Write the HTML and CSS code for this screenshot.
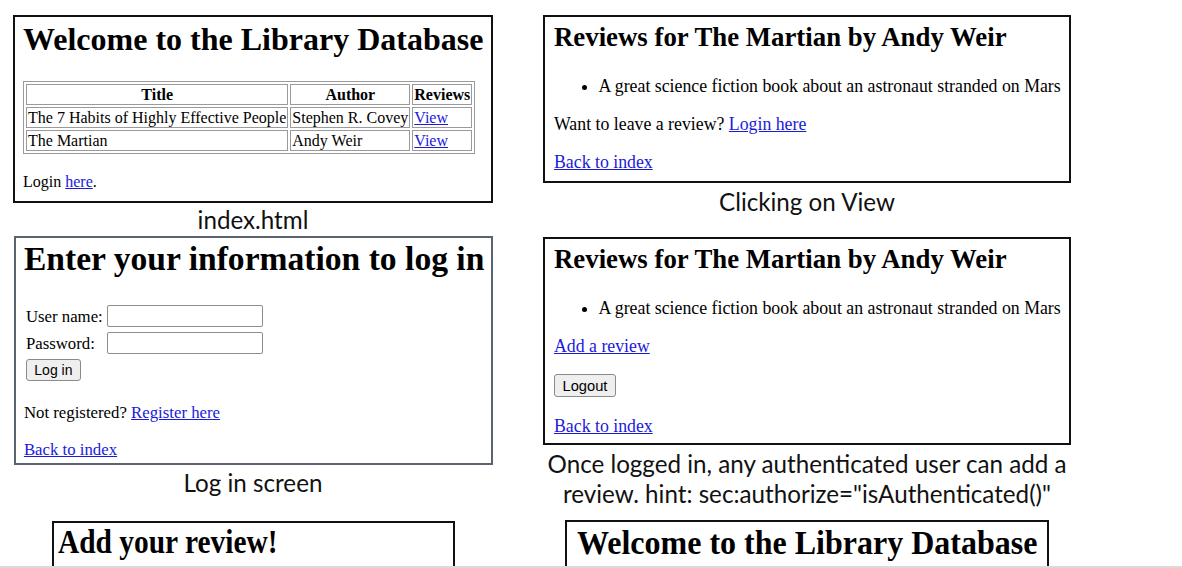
FILE: index.html
```html
<!DOCTYPE html>
<html lang="en">
<head>
<meta charset="utf-8">
<title>Library Database screens</title>
<link rel="stylesheet" href="styles.css">
</head>
<body>
<div class="slide">
  <div class="col col-left">
    <section class="shot shot-index">
      <h1 class="title-lg">Welcome to the Library Database</h1>
      <table class="books">
        <thead>
          <tr><th>Title</th><th>Author</th><th>Reviews</th></tr>
        </thead>
        <tbody>
          <tr><td>The 7 Habits of Highly Effective People</td><td>Stephen R. Covey</td><td><a href="#">View</a></td></tr>
          <tr><td>The Martian</td><td>Andy Weir</td><td><a href="#">View</a></td></tr>
        </tbody>
      </table>
      <p class="index-login">Login <a href="#">here</a>.</p>
    </section>
    <p class="caption cap-index">index.html</p>

    <section class="shot shot-login">
      <h1 class="title-login">Enter your information to log in</h1>
      <form class="login-form">
        <label class="login-label" for="u">User name:</label>
        <input class="login-input" id="u" type="text">
        <label class="login-label" for="p">Password:</label>
        <input class="login-input" id="p" type="password">
        <button class="btn btn-login" type="button">Log in</button>
      </form>
      <p class="login-reg">Not registered? <a href="#">Register here</a></p>
      <p class="login-back"><a href="#">Back to index</a></p>
    </section>
    <p class="caption cap-login">Log in screen</p>

    <section class="shot shot-add">
      <h1 class="title-add">Add your review!</h1>
    </section>
  </div>

  <div class="col col-right">
    <section class="shot shot-review shot-review-anon">
      <h2 class="title-review">Reviews for The Martian by Andy Weir</h2>
      <ul class="review-list">
        <li>A great science fiction book about an astronaut stranded on Mars</li>
      </ul>
      <p class="review-p">Want to leave a review? <a href="#">Login here</a></p>
      <p class="review-p"><a href="#">Back to index</a></p>
    </section>
    <p class="caption cap-view">Clicking on View</p>

    <section class="shot shot-review shot-review-auth">
      <h2 class="title-review">Reviews for The Martian by Andy Weir</h2>
      <ul class="review-list">
        <li>A great science fiction book about an astronaut stranded on Mars</li>
      </ul>
      <p class="review-p"><a href="#">Add a review</a></p>
      <button class="btn btn-logout" type="button">Logout</button>
      <p class="review-p review-back"><a href="#">Back to index</a></p>
    </section>
    <p class="caption cap-auth">Once logged in, any authenticated user can add a<br>review. hint: sec:authorize="isAuthenticated()"</p>

    <section class="shot shot-welcome">
      <h1 class="title-welcome">Welcome to the Library Database</h1>
    </section>
  </div>
</div>
</body>
</html>
```
FILE: styles.css
```css
* { box-sizing: border-box; }

html, body {
  margin: 0;
  padding: 0;
}

body {
  width: 1182px;
  height: 568px;
  overflow: hidden;
  background: #ffffff;
  color: #000000;
  font-family: "Liberation Serif", "Times New Roman", serif;
}

.slide {
  display: flex;
  height: 568px;
  overflow: hidden;
  border-bottom: 2px solid #dadada;
}

.col {
  display: flex;
  flex-direction: column;
  align-items: center;
  padding-top: 15px;
  flex: none;
}

.col-left { width: 506px; }
.col-right { width: 602px; }

.shot {
  flex: none;
  border: 2px solid #111111;
  background: #ffffff;
}

.shot a {
  color: #1a1adb;
  text-decoration: underline;
}

h1, h2, p, ul { margin: 0; }

/* ---------- index ---------- */
.shot-index {
  width: 480px;
  padding: 4px 8px 10px;
  font-size: 16px;
}

.title-lg {
  font-size: 32px;
  line-height: 36px;
  margin-bottom: 24px;
  white-space: nowrap;
}

.books {
  border: 1px solid #9a9a9a;
  border-spacing: 2px;
  font-size: 16px;
  line-height: 17px;
}

.books th,
.books td {
  border: 1px solid #9a9a9a;
  padding: 1px;
  text-align: left;
  white-space: nowrap;
}

.books th { text-align: center; }

.index-login {
  margin-top: 19px;
  line-height: 18px;
}

/* ---------- captions ---------- */
.caption {
  font-family: Lato, "Open Sans", sans-serif;
  font-size: 24.2px;
  line-height: 29px;
  color: #111111;
  text-align: center;
  white-space: nowrap;
}

.cap-index { margin: 2px 0 2px; }
.cap-login { margin: 2.5px 0 24.5px; }
.cap-view { margin: 4px 0 21px; }
.cap-auth { margin: 4.2px 0 11.8px; line-height: 30px; }

/* ---------- login ---------- */
.shot-login {
  width: 479px;
  padding: 2px 8.4px 4px;
  font-size: 16.8px;
  border-color: #5b6271;
}

.title-login {
  font-size: 33.6px;
  line-height: 38px;
  margin-bottom: 27px;
  white-space: nowrap;
}

.login-form {
  display: grid;
  grid-template-columns: 81px 156px;
  row-gap: 5px;
  align-items: center;
  margin-left: 2px;
}

.login-label {
  line-height: 19px;
  white-space: nowrap;
}

.login-input {
  width: 156px;
  height: 22px;
  margin: 0;
  border: 1px solid #8d8d8d;
  border-radius: 2px;
  background: #ffffff;
}

.btn {
  margin: 0;
  font-family: "Liberation Sans", Arial, sans-serif;
  color: #000000;
  background: #efefef;
  border: 1px solid #8a8a8a;
  border-radius: 3px;
  padding: 0;
}

.btn-login {
  grid-column: 1;
  width: 55px;
  height: 22px;
  font-size: 14px;
}

.login-reg {
  margin-top: 22px;
  line-height: 19px;
}

.login-back {
  margin-top: 18px;
  line-height: 19px;
}

/* ---------- reviews ---------- */
.shot-review {
  width: 528px;
  padding: 5px 9px 8px;
  font-size: 17.8px;
  line-height: 20.5px;
}

.shot-review-auth { padding-bottom: 6px; }

.title-review {
  font-size: 26.8px;
  line-height: 31px;
  margin-bottom: 23px;
  white-space: nowrap;
}

.review-list {
  padding-left: 44.5px;
  white-space: nowrap;
}

.review-p { margin-top: 17.5px; }

.btn-logout {
  display: block;
  margin-top: 18px;
  width: 62px;
  height: 23px;
  font-size: 14.7px;
}

.review-back { margin-top: 19px; }

/* ---------- cropped bottom screens ---------- */
.shot-add {
  width: 403px;
  height: 80px;
  padding: 1.3px 4.3px 0;
}

.title-add {
  font-size: 32.7px;
  line-height: 36px;
  white-space: nowrap;
  transform: scaleX(0.9);
  transform-origin: left center;
}

.shot-welcome {
  width: 484px;
  height: 80px;
  padding: 1.6px 10px 0;
}

.title-welcome {
  font-size: 33.7px;
  line-height: 38px;
  white-space: nowrap;
  transform: scaleX(0.95);
  transform-origin: left center;
}
```
